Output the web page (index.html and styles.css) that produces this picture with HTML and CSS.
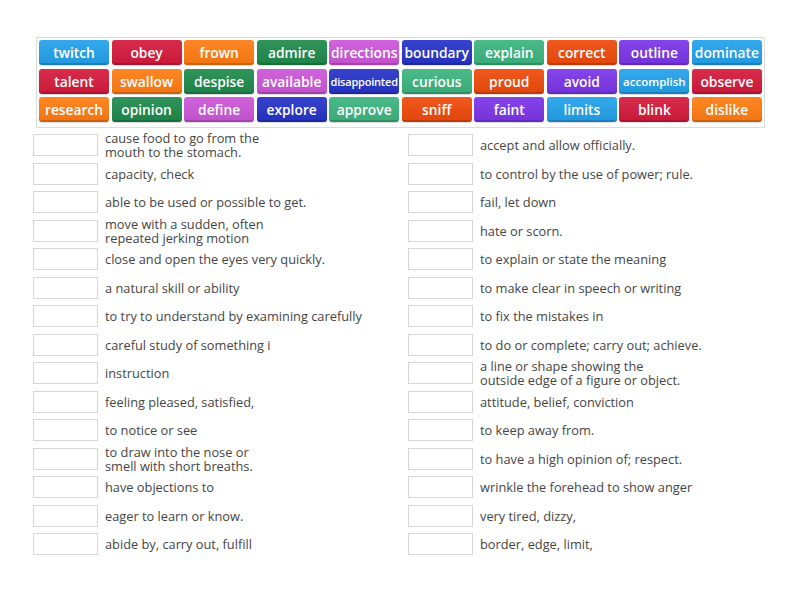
FILE: index.html
```html
<!DOCTYPE html>
<html>
<head>
<meta charset="utf-8">
<link rel="stylesheet" href="styles.css">
</head>
<body>
<div class="bank">
  <div class="tile blue">twitch</div>
  <div class="tile red">obey</div>
  <div class="tile orange">frown</div>
  <div class="tile dgreen">admire</div>
  <div class="tile magenta">directions</div>
  <div class="tile dblue">boundary</div>
  <div class="tile teal">explain</div>
  <div class="tile ored">correct</div>
  <div class="tile purple">outline</div>
  <div class="tile blue">dominate</div>

  <div class="tile red">talent</div>
  <div class="tile orange">swallow</div>
  <div class="tile dgreen">despise</div>
  <div class="tile magenta">available</div>
  <div class="tile dblue xs">disappointed</div>
  <div class="tile teal">curious</div>
  <div class="tile ored">proud</div>
  <div class="tile purple">avoid</div>
  <div class="tile blue sm">accomplish</div>
  <div class="tile red">observe</div>

  <div class="tile orange">research</div>
  <div class="tile dgreen">opinion</div>
  <div class="tile magenta">define</div>
  <div class="tile dblue">explore</div>
  <div class="tile teal">approve</div>
  <div class="tile ored">sniff</div>
  <div class="tile purple">faint</div>
  <div class="tile blue">limits</div>
  <div class="tile red">blink</div>
  <div class="tile orange">dislike</div>
</div>

<div class="lists">
  <div class="col">
    <div class="row"><div class="slot"></div><div class="def">cause food to go from the<br>mouth to the stomach.</div></div>
    <div class="row"><div class="slot"></div><div class="def">capacity, check</div></div>
    <div class="row"><div class="slot"></div><div class="def">able to be used or possible to get.</div></div>
    <div class="row"><div class="slot"></div><div class="def">move with a sudden, often<br>repeated jerking motion</div></div>
    <div class="row"><div class="slot"></div><div class="def">close and open the eyes very quickly.</div></div>
    <div class="row"><div class="slot"></div><div class="def">a natural skill or ability</div></div>
    <div class="row"><div class="slot"></div><div class="def">to try to understand by examining carefully</div></div>
    <div class="row"><div class="slot"></div><div class="def">careful study of something i</div></div>
    <div class="row"><div class="slot"></div><div class="def">instruction</div></div>
    <div class="row"><div class="slot"></div><div class="def">feeling pleased, satisfied,</div></div>
    <div class="row"><div class="slot"></div><div class="def">to notice or see</div></div>
    <div class="row"><div class="slot"></div><div class="def">to draw into the nose or<br>smell with short breaths.</div></div>
    <div class="row"><div class="slot"></div><div class="def">have objections to</div></div>
    <div class="row"><div class="slot"></div><div class="def">eager to learn or know.</div></div>
    <div class="row"><div class="slot"></div><div class="def">abide by, carry out, fulfill</div></div>
  </div>
  <div class="col">
    <div class="row"><div class="slot"></div><div class="def">accept and allow officially.</div></div>
    <div class="row"><div class="slot"></div><div class="def">to control by the use of power; rule.</div></div>
    <div class="row"><div class="slot"></div><div class="def">fail, let down</div></div>
    <div class="row"><div class="slot"></div><div class="def">hate or scorn.</div></div>
    <div class="row"><div class="slot"></div><div class="def">to explain or state the meaning</div></div>
    <div class="row"><div class="slot"></div><div class="def">to make clear in speech or writing</div></div>
    <div class="row"><div class="slot"></div><div class="def">to fix the mistakes in</div></div>
    <div class="row"><div class="slot"></div><div class="def">to do or complete; carry out; achieve.</div></div>
    <div class="row"><div class="slot"></div><div class="def">a line or shape showing the<br>outside edge of a figure or object.</div></div>
    <div class="row"><div class="slot"></div><div class="def">attitude, belief, conviction</div></div>
    <div class="row"><div class="slot"></div><div class="def">to keep away from.</div></div>
    <div class="row"><div class="slot"></div><div class="def">to have a high opinion of; respect.</div></div>
    <div class="row"><div class="slot"></div><div class="def">wrinkle the forehead to show anger</div></div>
    <div class="row"><div class="slot"></div><div class="def">very tired, dizzy,</div></div>
    <div class="row"><div class="slot"></div><div class="def">border, edge, limit,</div></div>
  </div>
</div>
</body>
</html>
```

FILE: styles.css
```css
html, body {
  margin: 0;
  padding: 0;
  background: #ffffff;
}
body {
  font-family: "Open Sans", "DejaVu Sans", sans-serif;
  width: 800px;
  height: 600px;
  overflow: hidden;
}
.bank {
  margin: 37px 0 0 36px;
  width: 723px;
  height: 84px;
  padding: 2px 2px 3px 2px;
  border: 1px solid #dcdcdc;
  display: grid;
  grid-template-columns: repeat(10, 70px);
  grid-auto-rows: 25px;
  column-gap: 2.55px;
  row-gap: 3.5px;
}
.tile {
  border-radius: 3px;
  color: #ffffff;
  font-weight: 600;
  font-size: 13.8px;
  display: flex;
  align-items: center;
  justify-content: center;
  white-space: nowrap;
  box-shadow: inset 0 -2px 0 rgba(0, 0, 0, 0.16), 0 1px 1px rgba(0, 0, 0, 0.15);
  background-image: linear-gradient(rgba(255, 255, 255, 0.08), rgba(0, 0, 0, 0.06));
}
.tile.sm { font-size: 11.5px; }
.tile.xs { font-size: 11px; letter-spacing: -0.2px; }
.blue { background-color: #23a1ea; }
.red { background-color: #d51a3c; }
.orange { background-color: #ff7c12; }
.dgreen { background-color: #1f8a4c; }
.magenta { background-color: #cc56d8; }
.dblue { background-color: #2633c7; }
.teal { background-color: #3cb47f; }
.ored { background-color: #ef4a0b; }
.purple { background-color: #7b35e7; }

.lists {
  margin-top: 3px;
  padding-left: 33px;
  display: grid;
  grid-template-columns: 375px 375px;
}
.col {
  display: flex;
  flex-direction: column;
}
.row {
  height: 28.5px;
  display: flex;
  align-items: center;
  gap: 7px;
}
.slot {
  flex: none;
  width: 63px;
  height: 20px;
  border: 1px solid #d6d6d6;
  background: #ffffff;
}
.def {
  font-size: 12.8px;
  line-height: 14px;
  color: #454545;
  white-space: nowrap;
}
```
